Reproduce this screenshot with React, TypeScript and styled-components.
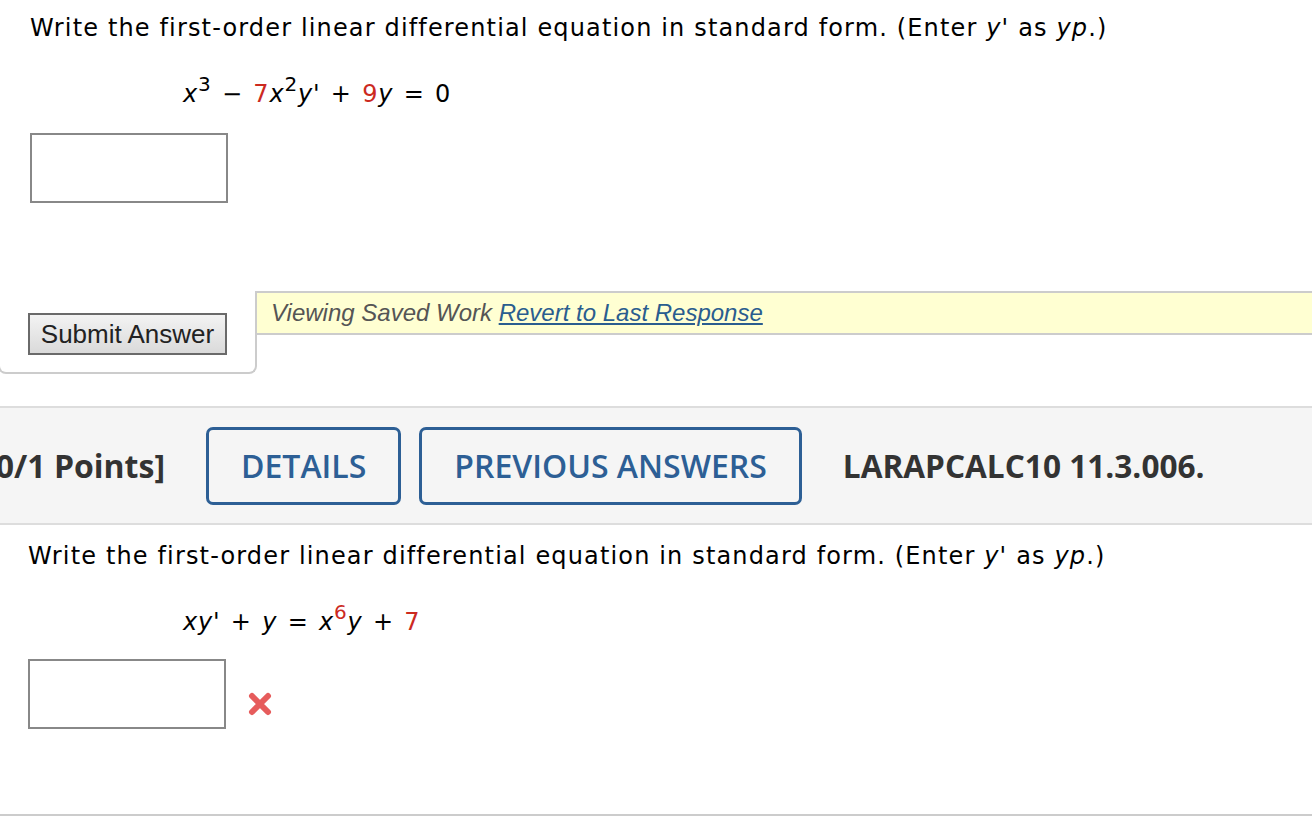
import React from 'react';
import styled, { createGlobalStyle } from 'styled-components';

const GlobalStyle = createGlobalStyle`
  html, body {
    margin: 0;
    padding: 0;
    background: #ffffff;
    overflow: hidden;
  }
`;

const Page = styled.div`
  width: 1312px;
  height: 826px;
  overflow: hidden;
  font-family: 'DejaVu Sans', Verdana, sans-serif;
  color: #000;
`;

const Question = styled.div<{ $left: number; $top: number }>`
  padding-left: ${(p) => p.$left}px;
  padding-top: ${(p) => p.$top}px;
`;

const Prompt = styled.p`
  margin: 0;
  font-size: 24px;
  line-height: 29px;
  letter-spacing: 1.15px;
  white-space: nowrap;
`;

const Equation = styled.div<{ $indent: number }>`
  margin: 37px 0 0 ${(p) => p.$indent}px;
  font-size: 24px;
  line-height: 29px;
  letter-spacing: 0.8px;
  word-spacing: 2px;
  white-space: nowrap;
`;

const V = styled.i`
  font-style: italic;
`;

const Red = styled.span`
  color: #cc2a1f;
`;

const Sup = styled.sup<{ $red?: boolean }>`
  font-size: 20px;
  line-height: 0;
  vertical-align: 11px;
  color: ${(p) => (p.$red ? '#cc2a1f' : 'inherit')};
`;

const AnswerRow = styled.div<{ $gap: number }>`
  display: flex;
  align-items: flex-end;
  gap: 21px;
  margin-top: ${(p) => p.$gap}px;
`;

const AnswerBox = styled.div`
  width: 194px;
  height: 66px;
  border: 2px solid #888888;
  background: #fff;
`;

const WrongMark = styled.svg`
  width: 26px;
  height: 26px;
  margin-bottom: 12px;
  filter: blur(0.5px);
`;

const SubmitRow = styled.div`
  display: flex;
  align-items: flex-start;
  margin-top: 88px;
`;

const SubmitPanel = styled.div`
  width: 255px;
  height: 81px;
  margin-left: -2px;
  box-sizing: content-box;
  border: 2px solid #cccccc;
  border-top: none;
  border-radius: 0 0 8px 8px;
  flex-shrink: 0;
`;

const SubmitButton = styled.button`
  margin: 22px 0 0 28px;
  width: 199px;
  height: 42px;
  border: 2px solid #6a6a6a;
  background: linear-gradient(#f3f3f3, #dadada);
  font-family: 'Liberation Sans', Arial, sans-serif;
  font-size: 26px;
  color: #222;
  padding: 0;
`;

const SavedNotice = styled.div`
  flex: 1;
  min-width: 1100px;
  height: 40px;
  line-height: 40px;
  border: 2px solid #cccccc;
  border-left: none;
  background: #ffffd2;
  padding-left: 14px;
  font-family: 'Liberation Sans', Arial, sans-serif;
  font-style: italic;
  font-size: 24px;
  color: #555555;
  white-space: nowrap;
`;

const RevertLink = styled.a`
  color: #2a5d8f;
  text-decoration: underline;
`;

const HeaderBar = styled.div`
  margin-top: 32px;
  height: 115px;
  border-top: 2px solid #dddddd;
  border-bottom: 2px solid #dddddd;
  background: #f5f5f5;
  display: flex;
  align-items: center;
  font-family: 'Open Sans', sans-serif;
`;

const Points = styled.div`
  width: 165px;
  margin-right: 41px;
  flex-shrink: 0;
  display: flex;
  justify-content: flex-end;
  overflow: hidden;
  white-space: nowrap;
  font-size: 32px;
  font-weight: 700;
  color: #333333;
`;

const OutlineButton = styled.button`
  height: 78px;
  box-sizing: border-box;
  padding: 0 32px;
  margin-right: 18px;
  border: 3px solid #2d5f95;
  border-radius: 7px;
  background: transparent;
  font-family: 'Open Sans', sans-serif;
  font-size: 32px;
  font-weight: 600;
  color: #2d5f95;
  white-space: nowrap;
`;

const ProblemCode = styled.div`
  margin-left: 23px;
  font-size: 31.6px;
  font-weight: 700;
  color: #333333;
  white-space: nowrap;
`;

const BottomRule = styled.div`
  margin-top: 85px;
  height: 2px;
  background: #cccccc;
`;

const App: React.FC = () => {
  return (
    <Page>
      <GlobalStyle />
      <Question $left={30} $top={14}>
        <Prompt>
          Write the first-order linear differential equation in standard form. (Enter <V>y'</V> as <V>yp</V>.)
        </Prompt>
        <Equation $indent={153}>
          <V>x</V>
          <Sup>3</Sup> − <Red>7</Red>
          <V>x</V>
          <Sup>2</Sup>
          <V>y'</V> + <Red>9</Red>
          <V>y</V> = 0
        </Equation>
        <AnswerRow $gap={24}>
          <AnswerBox />
        </AnswerRow>
      </Question>

      <SubmitRow>
        <SubmitPanel>
          <SubmitButton type="button">Submit Answer</SubmitButton>
        </SubmitPanel>
        <SavedNotice>
          Viewing Saved Work <RevertLink>Revert to Last Response</RevertLink>
        </SavedNotice>
      </SubmitRow>

      <HeaderBar>
        <Points>
          <span>1. [0/1 Points]</span>
        </Points>
        <OutlineButton type="button">DETAILS</OutlineButton>
        <OutlineButton type="button">PREVIOUS ANSWERS</OutlineButton>
        <ProblemCode>LARAPCALC10 11.3.006.</ProblemCode>
      </HeaderBar>

      <Question $left={28} $top={17}>
        <Prompt>
          Write the first-order linear differential equation in standard form. (Enter <V>y'</V> as <V>yp</V>.)
        </Prompt>
        <Equation $indent={155}>
          <V>xy'</V> + <V>y</V> = <V>x</V>
          <Sup $red>6</Sup>
          <V>y</V> + <Red>7</Red>
        </Equation>
        <AnswerRow $gap={22}>
          <AnswerBox />
          <WrongMark viewBox="0 0 26 26">
            <path
              d="M5 5 L21 21 M21 5 L5 21"
              stroke="#e65c5c"
              strokeWidth="6"
              strokeLinecap="round"
              fill="none"
            />
          </WrongMark>
        </AnswerRow>
      </Question>

      <BottomRule />
    </Page>
  );
};

export default App;
